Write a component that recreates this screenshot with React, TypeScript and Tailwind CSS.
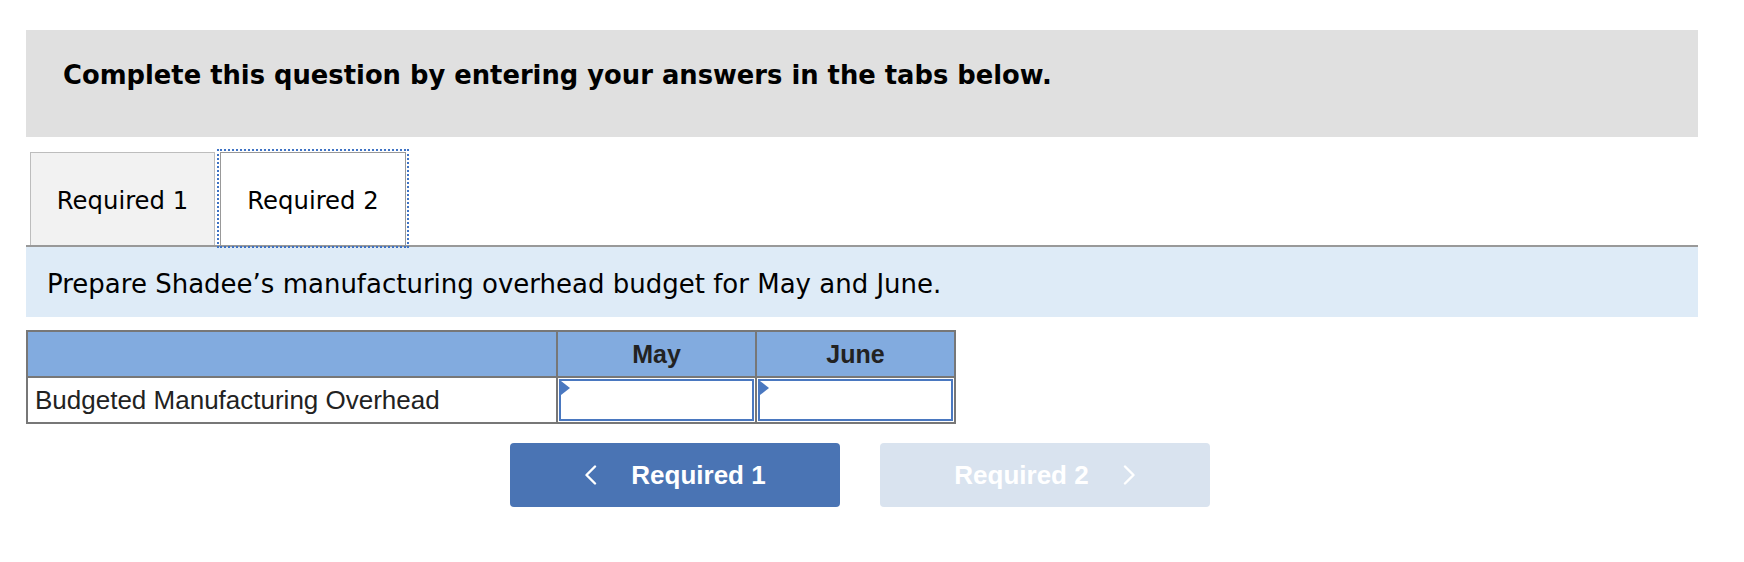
import { useState } from 'react'

const verdana = { fontFamily: '"DejaVu Sans", Verdana, sans-serif' }

function Chevron({ dir }: { dir: 'left' | 'right' }) {
  return (
    <svg width="14" height="20" viewBox="0 0 14 20" fill="none" className="shrink-0">
      <polyline
        points={dir === 'left' ? '11,1.5 2.5,10 11,18.5' : '3,1.5 11.5,10 3,18.5'}
        stroke="currentColor"
        strokeWidth="2.4"
        strokeLinecap="round"
        strokeLinejoin="round"
      />
    </svg>
  )
}

function AmountCell() {
  return (
    <td className="border-2 border-[#777777] p-[1px] h-[45px] align-top">
      <div className="relative h-[42px] w-full border-2 border-[#4a78c0] bg-white">
        {/* little marker in the corner of the input */}
        <span className="absolute left-0 top-0 h-0 w-0 border-y-[7px] border-l-[9px] border-y-transparent border-l-[#4a78c0]" />
        <input className="h-full w-full px-2 text-right outline-none bg-transparent" aria-label="amount" />
      </div>
    </td>
  )
}

export default function App() {
  const [tab, setTab] = useState(2)

  return (
    <div className="min-h-[562px] bg-white pt-[30px] pl-[26px] pr-[46px]">
      {/* Instruction banner */}
      <div className="h-[107px] bg-[#e0e0e0] pl-[37px] pt-[29px]">
        <p className="text-[25.8px] font-bold leading-[32px] text-black" style={verdana}>
          Complete this question by entering your answers in the tabs below.
        </p>
      </div>

      {/* Tabs */}
      <div className="mt-[15px] flex items-end border-b-2 border-[#999999]" style={verdana}>
        <button
          onClick={() => setTab(1)}
          className={`ml-[4px] flex h-[93px] w-[185px] items-center justify-center border border-b-0 pt-[4px] text-[24.3px] text-black ${
            tab === 1
              ? 'bg-white border-[#999999] outline-2 outline-dotted outline-[#3f73c4] outline-offset-1'
              : 'bg-[#f2f2f2] border-[#bdbdbd]'
          }`}
        >
          Required 1
        </button>
        <button
          onClick={() => setTab(2)}
          className={`ml-[5px] flex h-[93px] w-[186px] items-center justify-center border border-b-0 pt-[4px] text-[24.3px] text-black ${
            tab === 2
              ? 'bg-white border-[#999999] outline-2 outline-dotted outline-[#3f73c4] outline-offset-1'
              : 'bg-[#f2f2f2] border-[#bdbdbd]'
          }`}
        >
          Required 2
        </button>
      </div>

      {/* Prompt */}
      <div className="h-[70px] bg-[#deebf7] pl-[21px] pt-[22px]" style={verdana}>
        <p className="text-[26px] leading-[30px] text-black">
          Prepare Shadee’s manufacturing overhead budget for May and June.
        </p>
      </div>

      {/* Budget table */}
      <table
        className="mt-[13px] border-collapse border-2 border-[#777777] text-[26px] text-[#222222]"
        style={{ fontFamily: '"Liberation Sans", Arial, sans-serif' }}
      >
        <thead>
          <tr className="bg-[#82abdf]">
            <th className="w-[530px] border-2 border-[#777777] h-[46px]" />
            <th className="w-[199px] border-2 border-[#777777] h-[46px] text-[25px] font-bold leading-[44px]">May</th>
            <th className="w-[199px] border-2 border-[#777777] h-[46px] text-[25px] font-bold leading-[44px]">June</th>
          </tr>
        </thead>
        <tbody>
          <tr>
            <td className="border-2 border-[#777777] pl-[7px] h-[45px] leading-[43px] text-left">
              Budgeted Manufacturing Overhead
            </td>
            <AmountCell />
            <AmountCell />
          </tr>
        </tbody>
      </table>

      {/* Navigation */}
      <div
        className="mt-[19px] flex justify-center gap-[40px] pr-[4px]"
        style={{ fontFamily: '"Liberation Sans", Arial, sans-serif' }}
      >
        <button
          onClick={() => setTab(1)}
          className="flex h-[64px] w-[330px] items-center justify-center gap-[33px] rounded-[4px] bg-[#4a74b4] text-[26px] font-bold text-white"
        >
          <Chevron dir="left" />
          <span>Required 1</span>
        </button>
        <button
          disabled
          className="flex h-[64px] w-[330px] items-center justify-center gap-[33px] rounded-[4px] bg-[#d9e3ef] text-[26px] font-bold text-white"
        >
          <span>Required 2</span>
          <Chevron dir="right" />
        </button>
      </div>
    </div>
  )
}
